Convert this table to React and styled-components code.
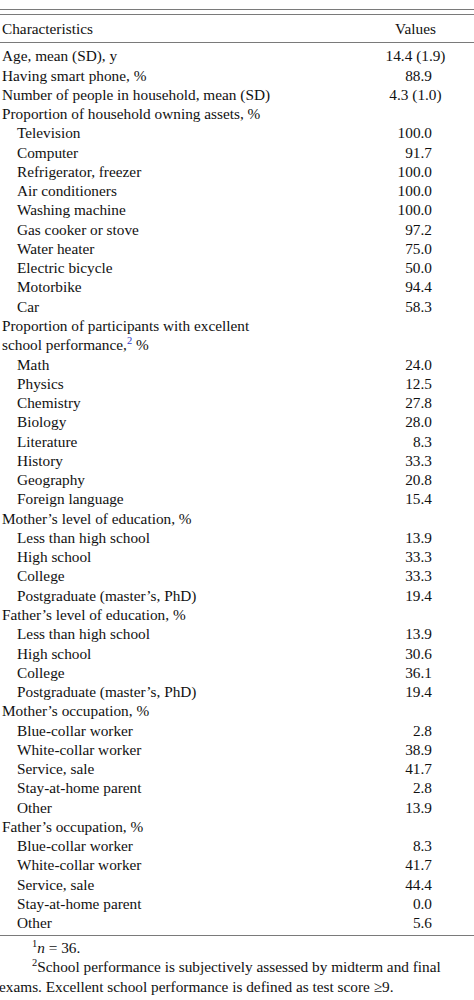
import styled, { createGlobalStyle } from "styled-components";

const GlobalStyle = createGlobalStyle`
  html, body {
    margin: 0;
    padding: 0;
    background: #fff;
  }
  body {
    font-family: "Liberation Serif", "Times New Roman", serif;
    color: #111;
    overflow: hidden;
  }
`;

const rows = [
  { label: "Age, mean (SD), y", value: "14.4 (1.9)", center: true },
  { label: "Having smart phone, %", value: "88.9" },
  { label: "Number of people in household, mean (SD)", value: "4.3 (1.0)", center: true },
  { label: "Proportion of household owning assets, %" },
  { label: "Television", value: "100.0", sub: true },
  { label: "Computer", value: "91.7", sub: true },
  { label: "Refrigerator, freezer", value: "100.0", sub: true },
  { label: "Air conditioners", value: "100.0", sub: true },
  { label: "Washing machine", value: "100.0", sub: true },
  { label: "Gas cooker or stove", value: "97.2", sub: true },
  { label: "Water heater", value: "75.0", sub: true },
  { label: "Electric bicycle", value: "50.0", sub: true },
  { label: "Motorbike", value: "94.4", sub: true },
  { label: "Car", value: "58.3", sub: true },
  { label: "school", special: true },
  { label: "Math", value: "24.0", sub: true },
  { label: "Physics", value: "12.5", sub: true },
  { label: "Chemistry", value: "27.8", sub: true },
  { label: "Biology", value: "28.0", sub: true },
  { label: "Literature", value: "8.3", sub: true },
  { label: "History", value: "33.3", sub: true },
  { label: "Geography", value: "20.8", sub: true },
  { label: "Foreign language", value: "15.4", sub: true },
  { label: "Mother’s level of education, %" },
  { label: "Less than high school", value: "13.9", sub: true },
  { label: "High school", value: "33.3", sub: true },
  { label: "College", value: "33.3", sub: true },
  { label: "Postgraduate (master’s, PhD)", value: "19.4", sub: true },
  { label: "Father’s level of education, %" },
  { label: "Less than high school", value: "13.9", sub: true },
  { label: "High school", value: "30.6", sub: true },
  { label: "College", value: "36.1", sub: true },
  { label: "Postgraduate (master’s, PhD)", value: "19.4", sub: true },
  { label: "Mother’s occupation, %" },
  { label: "Blue-collar worker", value: "2.8", sub: true },
  { label: "White-collar worker", value: "38.9", sub: true },
  { label: "Service, sale", value: "41.7", sub: true },
  { label: "Stay-at-home parent", value: "2.8", sub: true },
  { label: "Other", value: "13.9", sub: true },
  { label: "Father’s occupation, %" },
  { label: "Blue-collar worker", value: "8.3", sub: true },
  { label: "White-collar worker", value: "41.7", sub: true },
  { label: "Service, sale", value: "44.4", sub: true },
  { label: "Stay-at-home parent", value: "0.0", sub: true },
  { label: "Other", value: "5.6", sub: true },
];

export default function App() {
  return (
    <>
      <GlobalStyle />
      <Page>
        <Rule />
        <Rule $gap={4} />
        <HeadRow>
          <Label>Characteristics</Label>
          <Value $center>Values</Value>
        </HeadRow>
        <Rule />
        <Body>
          {rows.map((r, i) =>
            r.special ? (
              <Row key={i}>
                <Label>
                  Proportion of participants with excellent
                  <br />
                  school performance,<Ref>2</Ref> %
                </Label>
                <Value />
              </Row>
            ) : (
              <Row key={i}>
                <Label $sub={r.sub}>{r.label}</Label>
                <Value $center={r.center}>{r.value}</Value>
              </Row>
            )
          )}
        </Body>
        <Rule />
        <Notes>
          <Note>
            <Sup>1</Sup>
            <i>n</i> = 36.
          </Note>
          <Note>
            <Sup>2</Sup>School performance is subjectively assessed by midterm and final
            exams. Excellent school performance is defined as test score ≥9.
          </Note>
        </Notes>
      </Page>
    </>
  );
}

const Page = styled.div`
  width: 474px;
  padding-top: 9px;
  font-size: 15.3px;
`;

const Rule = styled.div`
  height: 1px;
  background: #7a7a7a;
  margin-top: ${(p) => (p.$gap ? p.$gap : 0)}px;
`;

const Row = styled.div`
  display: grid;
  grid-template-columns: 1fr 116px;
  line-height: 19.26px;
`;

const HeadRow = styled(Row)`
  padding: 3.5px 0 4px;
`;

const Body = styled.div`
  padding: 3.5px 0 2.5px;
`;

const Label = styled.div`
  padding-left: ${(p) => (p.$sub ? 17 : 2)}px;
  white-space: nowrap;
`;

const Value = styled.div`
  text-align: ${(p) => (p.$center ? "center" : "right")};
  padding-right: ${(p) => (p.$center ? 1 : 42)}px;
  white-space: nowrap;
`;

const Ref = styled.sup`
  color: #2b35c8;
  font-size: 10.5px;
  line-height: 0;
  vertical-align: 6px;
`;

const Notes = styled.div`
  padding-top: 2px;
  line-height: 19.4px;
`;

const Note = styled.p`
  margin: 0 0 0 -1px;
  text-indent: 33px;
`;

const Sup = styled.sup`
  font-size: 10.5px;
  line-height: 0;
  vertical-align: 6px;
`;
